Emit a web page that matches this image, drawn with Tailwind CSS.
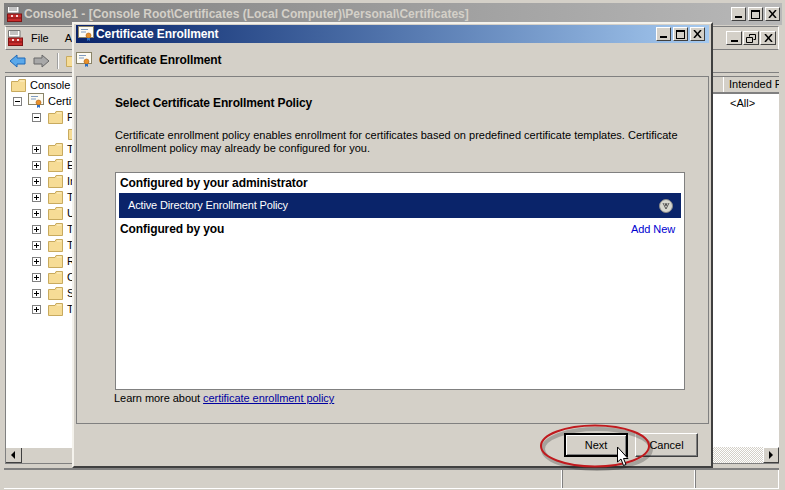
<!DOCTYPE html>
<html><head><meta charset="utf-8"><script src="https://cdn.jsdelivr.net/npm/@tailwindcss/browser@4"></script></head>
<body class="m-0 overflow-hidden">
<svg width="0" height="0" class="absolute"><defs>
<g id="folder"><path d="M.5 3.5V13.5H14.5V1.5H8L7 3.5Z" fill="#f6dc96" stroke="#c8aa5e"/><path d="M9 2.5H13.5V3.5H9Z" fill="#fff3cc"/></g>
<g id="plus"><rect x=".5" y=".5" width="8" height="8" fill="#fff" stroke="#808080"/><path d="M2 4.5H7M4.5 2V7" stroke="#000"/></g>
<g id="minus"><rect x=".5" y=".5" width="8" height="8" fill="#fff" stroke="#808080"/><path d="M2 4.5H7" stroke="#000"/></g>
<g id="cert"><rect x=".5" y=".5" width="15" height="11" fill="#fdfbf2" stroke="#8a8468"/><path d="M3 3.5H10M3 6H8" stroke="#7f9bc0"/><circle cx="10.5" cy="9.5" r="2.5" fill="#e8912a" stroke="#a8601a" stroke-width=".6"/><path d="M9 12V15L10.5 14L12 15V12" fill="#2d6fc0"/></g>
<g id="mmc"><path d="M.5 .5H12V7H.5Z" fill="#fff" stroke="#777"/><path d="M2 2H10M2 4H10" stroke="#888"/><rect x=".5" y="8" width="14" height="7.5" fill="#c92c2c" stroke="#7e1414"/><path d="M4 9H6V11H4ZM9 9H11V11H9Z" fill="#f7d4d4"/><path d="M1 12H14" stroke="#7e1414"/></g>
</defs></svg>
<div class="relative w-[785px] h-[490px] overflow-hidden bg-[#d4d0c8] font-['Tahoma','Liberation_Sans',sans-serif] text-[11px] text-[#000] flex flex-col border-t-[1px] border-l-[1px] border-white/0 box-border">

<!-- Main window title -->
<div class="h-[22px] mx-[3px] mt-[2px] mb-0 shrink-0 bg-gradient-to-r from-[#808080] to-[#b8b8b8] flex items-center pl-[3px] pr-[1px]">
  <svg width="16" height="16" class="shrink-0"><use href="#mmc"/></svg>
  <span class="ml-[1px] font-bold text-[#d4d0c8] whitespace-nowrap text-[12px]">Console1 - [Console Root\Certificates (Local Computer)\Personal\Certificates]</span>
  <div class="ml-auto flex gap-[2px] pr-[1px]">
    <div class="w-[15px] h-[14px] bg-[#d4d0c8] border-r border-b border-[#404040] border-t-white border-l-white border-t border-l flex items-end justify-center pb-[2px]"><div class="w-[7px] h-[2px] bg-black"></div></div>
    <div class="w-[15px] h-[14px] bg-[#d4d0c8] border-r border-b border-[#404040] border-t-white border-l-white border-t border-l flex items-center justify-center"><div class="w-[9px] h-[9px] border border-black border-t-2"></div></div>
    <div class="w-[15px] h-[14px] bg-[#d4d0c8] border-r border-b border-[#404040] border-t-white border-l-white border-t border-l flex items-center justify-center"><svg width="9" height="8"><path d="M1 0L8 8M8 0L1 8" stroke="#000" stroke-width="1.5"/></svg></div>
  </div>
</div>

<!-- Menu bar -->
<div class="h-[24px] ml-[4px] mr-[6px] shrink-0 border border-white border-b-[#808080] border-t-[#808080] flex items-center pl-[2px] mt-[1px]">
  <svg width="16" height="16" class="shrink-0"><use href="#mmc"/></svg>
  <span class="ml-[7px]">File</span><span class="ml-[16px]">Action</span>
  <div class="ml-auto flex gap-[1px] pr-[2px]">
    <div class="w-[16px] h-[14px] bg-[#d4d0c8] border-r border-b border-[#404040] border-t-white border-l-white border-t border-l flex items-end justify-center pb-[2px]"><div class="w-[7px] h-[2px] bg-black"></div></div>
    <div class="w-[16px] h-[14px] bg-[#d4d0c8] border-r border-b border-[#404040] border-t-white border-l-white border-t border-l flex items-center justify-center"><svg width="10" height="9"><path d="M3.5 2.5V.5H9.5V5.5H7.5M.5 3.5H6.5V8.5H.5Z" fill="none" stroke="#000"/></svg></div>
    <div class="w-[16px] h-[14px] bg-[#d4d0c8] border-r border-b border-[#404040] border-t-white border-l-white border-t border-l flex items-center justify-center"><svg width="9" height="8"><path d="M1 0L8 8M8 0L1 8" stroke="#000" stroke-width="1.5"/></svg></div>
  </div>
</div>

<!-- Toolbar -->
<div class="h-[23px] ml-[4px] mr-[6px] shrink-0 border-b border-[#808080] flex items-center pl-[4px] gap-[7px]">
  <svg width="17" height="14"><path d="M1 7L8 1V4H16V10H8V13Z" fill="#5aa8ea" stroke="#1c68b8"/></svg>
  <svg width="17" height="14"><path d="M16 7L9 1V4H1V10H9V13Z" fill="#a8a8a8" stroke="#686868"/></svg>
  <div class="w-[2px] h-[16px] bg-[#a0a0a0] border-r border-white"></div>
  <svg width="16" height="16"><use href="#folder"/></svg>
</div>

<!-- Panes -->
<div class="flex-1 min-h-0 flex ml-[4px] mr-[6px] mt-[3px] gap-0 relative">
  <div class="w-full flex border border-[#808080] border-r-0">
    <div class="w-[225px] bg-white flex flex-col shrink-0">
      <div class="flex-1 pt-[0px] text-[#000] leading-[16px] whitespace-nowrap overflow-hidden">
        <div class="h-[16px] flex items-center mt-[0px] pl-[5px]"><svg width="15" height="15" class="mr-[4px]"><use href="#folder"/></svg>Console Root</div>
        <div class="h-[16px] flex items-center pl-[7px]"><svg width="9" height="9" class="mr-[6px]"><use href="#minus"/></svg><svg width="16" height="16" class="mr-[4px]"><use href="#cert"/></svg>Certificates</div>
        <div class="h-[16px] flex items-center pl-[26px]"><svg width="9" height="9" class="mr-[7px]"><use href="#minus"/></svg><svg width="15" height="15" class="mr-[4px]"><use href="#folder"/></svg>Personal</div>
        <div class="h-[16px] flex items-center pl-[62px]"><svg width="15" height="15"><use href="#folder"/></svg></div>
        <div class="h-[16px] flex items-center pl-[26px]"><svg width="9" height="9" class="mr-[7px]"><use href="#plus"/></svg><svg width="15" height="15" class="mr-[4px]"><use href="#folder"/></svg><span>Trusted</span></div>
        <div class="h-[16px] flex items-center pl-[26px]"><svg width="9" height="9" class="mr-[7px]"><use href="#plus"/></svg><svg width="15" height="15" class="mr-[4px]"><use href="#folder"/></svg><span>Enterprise</span></div>
        <div class="h-[16px] flex items-center pl-[26px]"><svg width="9" height="9" class="mr-[7px]"><use href="#plus"/></svg><svg width="15" height="15" class="mr-[4px]"><use href="#folder"/></svg><span>Intermediate</span></div>
        <div class="h-[16px] flex items-center pl-[26px]"><svg width="9" height="9" class="mr-[7px]"><use href="#plus"/></svg><svg width="15" height="15" class="mr-[4px]"><use href="#folder"/></svg><span>Trusted</span></div>
        <div class="h-[16px] flex items-center pl-[26px]"><svg width="9" height="9" class="mr-[7px]"><use href="#plus"/></svg><svg width="15" height="15" class="mr-[4px]"><use href="#folder"/></svg><span>Untrusted</span></div>
        <div class="h-[16px] flex items-center pl-[26px]"><svg width="9" height="9" class="mr-[7px]"><use href="#plus"/></svg><svg width="15" height="15" class="mr-[4px]"><use href="#folder"/></svg><span>Third-Party</span></div>
        <div class="h-[16px] flex items-center pl-[26px]"><svg width="9" height="9" class="mr-[7px]"><use href="#plus"/></svg><svg width="15" height="15" class="mr-[4px]"><use href="#folder"/></svg><span>Trusted</span></div>
        <div class="h-[16px] flex items-center pl-[26px]"><svg width="9" height="9" class="mr-[7px]"><use href="#plus"/></svg><svg width="15" height="15" class="mr-[4px]"><use href="#folder"/></svg><span>Remote</span></div>
        <div class="h-[16px] flex items-center pl-[26px]"><svg width="9" height="9" class="mr-[7px]"><use href="#plus"/></svg><svg width="15" height="15" class="mr-[4px]"><use href="#folder"/></svg><span>Certificate</span></div>
        <div class="h-[16px] flex items-center pl-[26px]"><svg width="9" height="9" class="mr-[7px]"><use href="#plus"/></svg><svg width="15" height="15" class="mr-[4px]"><use href="#folder"/></svg><span>Smart Card</span></div>
        <div class="h-[16px] flex items-center pl-[26px]"><svg width="9" height="9" class="mr-[7px]"><use href="#plus"/></svg><svg width="15" height="15" class="mr-[4px]"><use href="#folder"/></svg><span>Trusted</span></div>
      </div>
      <div class="h-[16px] shrink-0 flex bg-[#d4d0c8] border-t border-white">
        <div class="w-[16px] border-r border-b border-[#404040] flex items-center justify-center"><svg width="5" height="8"><path d="M4 0V8L0 4Z"/></svg></div>
      </div>
    </div>
    <div class="flex-1 bg-white flex flex-col min-w-0">
      <div class="h-[17px] shrink-0 bg-[#d4d0c8] border-b-2 border-[#808080] flex justify-end">
        <div class="w-[56px] border-l border-white pl-[5px] text-[#000] leading-[15px] whitespace-nowrap overflow-hidden">Intended F</div>
      </div>
      <div class="flex-1 flex justify-end"><div class="w-[56px] pl-[7px] pt-[1px] text-[#000]">&lt;All&gt;</div></div>
      <div class="h-[16px] shrink-0 flex justify-end bg-[repeating-conic-gradient(#d4d0c8_0_25%,#fff_0_50%)] bg-[length:2px_2px]">
        <div class="w-[16px] bg-[#d4d0c8] border border-white border-r-[#404040] border-b-[#404040] flex items-center justify-center"><svg width="5" height="8"><path d="M0 0V8L4 4Z"/></svg></div>
      </div>
    </div>
  </div>
</div>

<!-- Status bar -->
<div class="h-[21px] ml-[3px] mr-[6px] mt-[4px] mb-[1px] shrink-0 flex border-t-2 border-[#808080] border-b border-b-white">
  <div class="w-[558px] border-r border-white"></div>
  <div class="w-[133px] border-r border-white border-l border-l-[#808080]"></div>
  <div class="flex-1 border-r border-white border-l border-l-[#808080]"></div>
</div>

<!-- Dialog -->
<div class="absolute left-[71px] top-[21px] w-[641px] h-[446px] bg-[#d4d0c8] border-l-2 border-t-2 border-[#f4f2ec] border-r-2 border-r-[#404040] border-b-2 border-b-[#404040] flex flex-col px-[2px] pt-[1px]">
  <div class="h-[18px] shrink-0 bg-gradient-to-r from-[#0a246a] to-[#a6caf0] flex items-center pl-[2px] pr-[4px]">
    <svg width="16" height="16" class="shrink-0"><use href="#cert"/></svg>
    <span class="ml-[2px] font-bold text-white text-[12px] tracking-[-.1px]">Certificate Enrollment</span>
    <div class="ml-auto flex gap-[2px]">
      <div class="w-[15px] h-[14px] bg-[#d4d0c8] border-r border-b border-[#404040] border-t-white border-l-white border-t border-l flex items-end justify-center pb-[2px]"><div class="w-[7px] h-[2px] bg-black"></div></div>
      <div class="w-[15px] h-[14px] bg-[#d4d0c8] border-r border-b border-[#404040] border-t-white border-l-white border-t border-l flex items-center justify-center"><div class="w-[9px] h-[9px] border border-black border-t-2"></div></div>
      <div class="w-[15px] h-[14px] bg-[#d4d0c8] border-r border-b border-[#404040] border-t-white border-l-white border-t border-l flex items-center justify-center"><svg width="9" height="8"><path d="M1 0L8 8M8 0L1 8" stroke="#000" stroke-width="1.5"/></svg></div>
    </div>
  </div>
  <div class="h-[33px] shrink-0 flex items-center">
    <svg width="16" height="16" class="shrink-0"><use href="#cert"/></svg>
    <span class="ml-[7px] font-bold text-[12px] tracking-[-.1px]">Certificate Enrollment</span>
  </div>
  <div class="h-[348px] shrink-0 border border-[#808080] pl-[38px] pr-[23px] flex flex-col">
    <div class="font-bold mt-[19px] text-[12px] leading-[14px] tracking-[-.14px]">Select Certificate Enrollment Policy</div>
    <p class="mt-[19px] leading-[13px] w-[570px]">Certificate enrollment policy enables enrollment for certificates based on predefined certificate templates. Certificate enrollment policy may already be configured for you.</p>
    <div class="mt-[17px] h-[218px] shrink-0 bg-white border border-[#808080] px-[3px] flex flex-col">
      <div class="font-bold h-[20px] leading-[20px] pl-[1px] text-[12px] tracking-[-.1px]">Configured by your administrator</div>
      <div class="h-[25px] shrink-0 bg-[#0a246a] text-white flex items-center pl-[9px] pr-[8px]">
        <span class="tracking-[-.15px]">Active Directory Enrollment Policy</span>
        <svg width="14" height="14" class="ml-auto"><circle cx="7" cy="7" r="6.5" fill="#d8d8d0" stroke="#888"/><path d="M4 4L7 10L10 4M6 4L7 7L8 4" fill="none" stroke="#555"/></svg>
      </div>
      <div class="flex justify-between items-center h-[22px] pl-[1px] pr-[6px]">
        <span class="font-bold text-[12px] tracking-[-.1px]">Configured by you</span>
        <span class="text-[#0000d0] tracking-[-.1px]">Add New</span>
      </div>
    </div>
    <div class="mt-[1px] -ml-[1px] leading-[14px] tracking-[-.05px]">Learn more about <span class="text-[#0000a0] underline">certificate enrollment policy</span></div>
  </div>
  <div class="flex-1 flex justify-end items-start pt-[9px] pr-[11px] gap-[7px]">
    <div class="w-[64px] h-[24px] bg-[#d4d0c8] border-2 border-[#000] flex items-center justify-center shadow-[inset_1px_1px_0_#fff,inset_-1px_-1px_0_#808080]">Next</div>
    <div class="w-[63px] h-[24px] bg-[#d4d0c8] border border-white border-r-[#404040] border-b-[#404040] flex items-center justify-center shadow-[inset_-1px_-1px_0_#808080]">Cancel</div>
  </div>
</div>

<!-- Red callout -->
<svg class="absolute left-[534px] top-[419px]" width="122" height="56" viewBox="0 0 122 56">
  <ellipse cx="62" cy="29" rx="54" ry="20" fill="none" stroke="#000" stroke-opacity=".22" stroke-width="4"/>
  <ellipse cx="60" cy="26" rx="54" ry="20.5" fill="none" stroke="#c01a1e" stroke-width="2"/>
</svg>
<!-- Cursor -->
<svg class="absolute left-[615px] top-[445px]" width="15" height="22" viewBox="0 0 15 22"><path d="M1.5 1V16L5 13L7.5 19.5L10 18.5L7.5 12.5H12Z" fill="#fff" stroke="#000"/></svg>
</div>
</body></html>
